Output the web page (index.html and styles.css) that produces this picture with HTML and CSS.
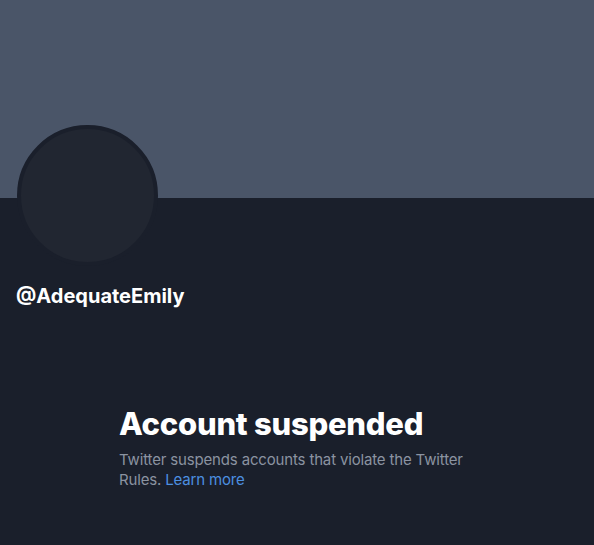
FILE: index.html
```html
<!DOCTYPE html>
<html lang="en">
<head>
<title>@AdequateEmily</title>
<meta charset="utf-8">
<meta name="viewport" content="width=device-width, initial-scale=1">
<link rel="stylesheet" href="styles.css">
</head>
<body>

<div class="banner"></div>

<div class="profile">
  <div class="avatar"></div>
  <div class="handle">@AdequateEmily</div>
</div>

<div class="empty">
  <h1>Account suspended</h1>
  <p>Twitter suspends accounts that violate the Twitter Rules. <a href="#">Learn more</a></p>
</div>

</body>
</html>
```
FILE: styles.css
```css
* {
  box-sizing: border-box;
}

body {
  margin: 0;
  background-color: #1a1f2b;
  font-family: Inter, "Open Sans", Roboto, sans-serif;
  color: #ffffff;
}

/* Header image */
.banner {
  height: 198px;
  background-color: #4a5568;
}

.profile {
  padding: 0 16px;
}

.avatar {
  width: 141px;
  height: 141px;
  margin-top: -73px;
  margin-left: 1px;
  border-radius: 50%;
  border: 4px solid #1a1f2b;
  background-color: #212631;
}

.handle {
  margin-top: 18px;
  font-size: 20px;
  line-height: 24px;
  font-weight: 700;
}

/* Suspended message */
.empty {
  width: 356px;
  margin: 98px auto 0;
}

.empty h1 {
  margin: 0 0 8px;
  font-size: 31px;
  line-height: 36px;
  font-weight: 800;
  letter-spacing: -0.25px;
}

.empty p {
  margin: 0;
  font-size: 15px;
  line-height: 20px;
  letter-spacing: -0.16px;
  color: #8b93a1;
}

.empty a {
  color: #4c8fe0;
  text-decoration: none;
}
```
